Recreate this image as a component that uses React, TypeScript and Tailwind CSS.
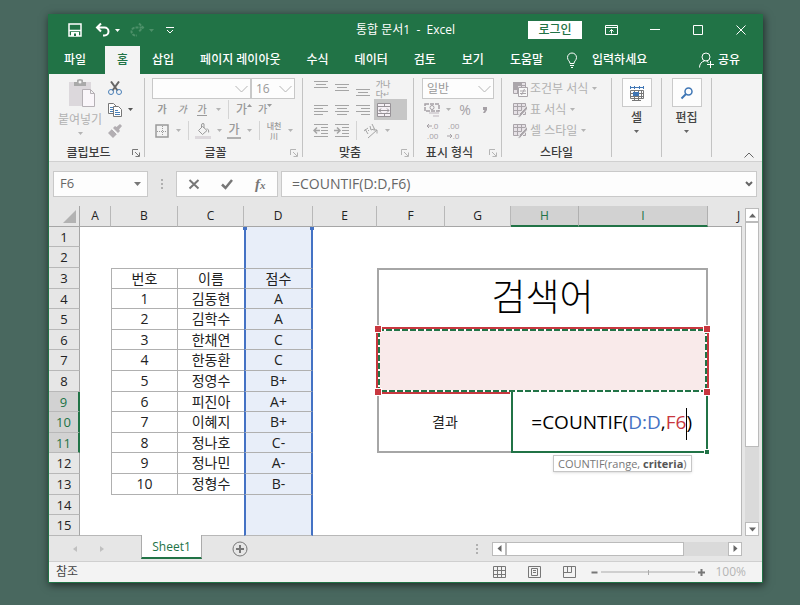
import type { ReactNode } from 'react';
import clsx from 'clsx';

const menuTabs = ['삽입', '페이지 레이아웃', '수식', '데이터', '검토', '보기', '도움말'];

const students = [
  ['번호', '이름', '점수'],
  ['1', '김동현', 'A'],
  ['2', '김학수', 'A'],
  ['3', '한채연', 'C'],
  ['4', '한동환', 'C'],
  ['5', '정영수', 'B+'],
  ['6', '피진아', 'A+'],
  ['7', '이혜지', 'B+'],
  ['8', '정나호', 'C-'],
  ['9', '정나민', 'A-'],
  ['10', '정형수', 'B-'],
];

const rowHeights = ['h-[20px]', 'h-[21px]', 'h-[21px]', 'h-[20px]', 'h-[21px]'];

function Caret({ className = 'text-[#b4b4b4]' }: { className?: string }) {
  return (
    <svg viewBox="0 0 5 3" className={clsx('h-[3px] w-[5px] shrink-0', className)} fill="currentColor">
      <path d="M0 0h5L2.5 3z" />
    </svg>
  );
}

function Icon({ children, size = 16, className }: { children: ReactNode; size?: number; className?: string }) {
  return (
    <svg
      viewBox={`0 0 ${size} ${size}`}
      width={size}
      height={size}
      className={clsx('shrink-0', className)}
      fill="none"
      stroke="currentColor"
    >
      {children}
    </svg>
  );
}

function Tool({ label, className = 'w-5', children }: { label: string; className?: string; children: ReactNode }) {
  return (
    <button aria-label={label} className={clsx('flex h-full shrink-0 items-center justify-center', className)}>
      {children}
    </button>
  );
}

function Drop({ label }: { label: string }) {
  return (
    <Tool label={label} className="w-3">
      <Caret />
    </Tool>
  );
}

function Row({ children, className }: { children: ReactNode; className?: string }) {
  return <div className={clsx('flex h-[21px] items-center', className)}>{children}</div>;
}

function Rule() {
  return <span className="mx-1 h-[19px] w-px shrink-0 bg-[#d4d4d4]" />;
}

function Group({
  title,
  className,
  launcher,
  children,
}: {
  title?: string;
  className: string;
  launcher?: string;
  children: ReactNode;
}) {
  return (
    <>
      <section className={clsx('flex shrink-0 flex-col', className)}>
        <div className="h-[63px]">{children}</div>
        {title && (
          <div className="flex h-5 items-center pt-[3px]">
            <h2 className="flex-1 text-center text-xs font-medium text-[#3b3b3b]">{title}</h2>
            {launcher && (
              <button aria-label={`${title} 설정`} className={clsx('flex w-4 justify-center', launcher)}>
                <Icon size={8}>
                  <path d="M.5 6V.5H6M3 3l4 4M7.500 3.500v4h-4" />
                </Icon>
              </button>
            )}
          </div>
        )}
      </section>
      <span className="mb-1 w-px shrink-0 bg-[#c3c3c3]" />
    </>
  );
}

function Combo({ label, value, className }: { label: string; value: string; className: string }) {
  return (
    <div className={clsx('relative h-[21px]', className)}>
      <select
        aria-label={label}
        className="block h-full w-full appearance-none border border-[#c8c8c8] bg-[#fdfdfd] pl-1 text-xs leading-[19px] text-[#999]"
      >
        <option>{value}</option>
      </select>
      <svg
        viewBox="0 0 13 8"
        className="pointer-events-none absolute top-[7px] right-[3px] h-2 w-[13px]"
        fill="none"
        stroke="#b5b5b5"
      >
        <path d="M.5 1l6 6 6-6" />
      </svg>
    </div>
  );
}

function Lines({ rows }: { rows: number[][] }) {
  return (
    <Icon>
      {rows.map(([x, y, w]) => (
        <path key={y} d={`M${x} ${y}.5h${w}`} />
      ))}
    </Icon>
  );
}

function TitleBar() {
  return (
    <header className="flex h-8 items-center text-white">
      <div className="flex flex-1 items-center">
        <button aria-label="저장" className="ml-[18px]">
          <Icon>
            <path strokeWidth="1.500" d="M2 2h12v12H2zM2 8.500h12" />
            <path fill="currentColor" stroke="none" d="M4 10h8v4H4z" />
            <path stroke="#217346" strokeWidth="2" d="M8 11.500V14" />
          </Icon>
        </button>
        <button aria-label="실행 취소" className="ml-3">
          <Icon>
            <path strokeWidth="2" d="M6 1.500L2 5.500l4 4M2.500 5.500H9.500a4 4 0 0 1 0 8H8" />
          </Icon>
        </button>
        <button aria-label="실행 취소 목록" className="ml-1">
          <Caret className="text-white" />
        </button>
        <button aria-label="다시 실행" className="ml-[9px] text-[#4d9069]">
          <Icon>
            <path strokeWidth="2" strokeDasharray="3 1" d="M10 1.500l4 4-4 4M13.500 5.500H6.500a4 4 0 0 0 0 8H8" />
          </Icon>
        </button>
        <button aria-label="다시 실행 목록" className="ml-1">
          <Caret className="text-[#4d9069]" />
        </button>
        <button aria-label="빠른 실행 도구 모음" className="ml-3">
          <Icon size={8}>
            <path d="M0 1.500h8M1 4l3 3 3-3" />
          </Icon>
        </button>
      </div>
      <h1 className="text-xs whitespace-pre">통합 문서1  -  Excel</h1>
      <div className="flex flex-1 items-center justify-end">
        <button className="mr-2 h-[18px] w-[54px] bg-white text-xs leading-[18px] font-medium text-[#217346]">로그인</button>
        <button aria-label="리본 메뉴 표시 옵션" className="flex w-[43px] justify-center">
          <Icon size={13}>
            <path d="M.5 1.500h12v9H.5zM.5 3.500h12M6.500 9.500V5.500M4.500 7.500l2-2 2 2" />
          </Icon>
        </button>
        <button aria-label="최소화" className="flex w-[43px] justify-center">
          <Icon size={10}>
            <path d="M0 4.500h10" />
          </Icon>
        </button>
        <button aria-label="최대화" className="flex w-[43px] justify-center">
          <Icon size={10}>
            <path d="M.5.5h9v9h-9z" />
          </Icon>
        </button>
        <button aria-label="닫기" className="flex w-[43px] justify-center">
          <Icon size={10}>
            <path d="M.5.5l9 9M9.500.5l-9 9" />
          </Icon>
        </button>
      </div>
    </header>
  );
}

function MenuBar() {
  return (
    <nav className="flex h-7 items-stretch text-xs font-medium whitespace-nowrap text-white">
      <button className="mr-1 w-[52px]">파일</button>
      <button className="w-[35px] bg-[#f3f3f3] text-[#217346]">홈</button>
      <div className="flex gap-[2px]">
        {menuTabs.map((tab) => (
          <button key={tab} className="px-3">
            {tab}
          </button>
        ))}
      </div>
      <button className="ml-[9px] flex items-center gap-3">
        <Icon>
          <path d="M6 11.500C6 9 3.500 8.500 3.500 5.500a4.500 4.500 0 0 1 9 0C12.500 8.500 10 9 10 11.500zM6 13.500h4M7 15.500h2" />
        </Icon>
        입력하세요
      </button>
      <button className="mr-[22px] ml-auto flex items-center gap-1">
        <Icon>
          <circle cx="8" cy="5" r="4" />
          <path d="M1.500 15.500c0-3.500 2-6 5-6.500M8.500 9l2 1.500M12.500 9v7M9 12.500h7" />
        </Icon>
        공유
      </button>
    </nav>
  );
}

function ClipboardGroup() {
  return (
    <Group title="클립보드" className="w-[95px]" launcher="text-[#777]">
      <div className="flex">
        <button className="ml-2 flex w-[46px] flex-col items-center text-xs leading-4 whitespace-nowrap text-[#b1b1b1]">
          <svg viewBox="0 0 28 30" className="ml-1 h-[30px] w-7">
            <path fill="#dcd8dc" d="M1 4h22v24H1z" />
            <path fill="#a9a9a9" d="M6 4h3V2.500Q9 1 12 1t3 1.500V4h3v4H6z" />
            <circle cx="12" cy="4" r="1.500" fill="#f3f3f3" />
            <path fill="#faf6fa" stroke="#b5b0b5" d="M14.500 11.500h8l4 4v13h-12zM22.500 11.500v4h4" />
          </svg>
          <span className="mt-1">붙여넣기</span>
          <Caret className="mt-1 text-[#b4b4b4]" />
        </button>
        <div className="ml-1">
          <Row>
            <Tool label="잘라내기" className="w-4">
              <Icon>
                <path stroke="#666" strokeWidth="2" d="M4 .5l6.500 9M12 .5l-6.500 9" />
                <circle cx="4" cy="11" r="2.500" stroke="#4a80b8" />
                <circle cx="12" cy="11" r="2.500" stroke="#4a80b8" />
              </Icon>
            </Tool>
          </Row>
          <Row>
            <Tool label="복사" className="w-4">
              <Icon>
                <path stroke="#777" fill="#fff" d="M1.500 1.500h5l3 3v7h-8z" />
                <path stroke="#4a80b8" d="M3 5.500h3M3 7.500h3M3 9.500h3" />
                <path stroke="#777" fill="#fff" d="M6.500 4.500h5l3 3v7h-8z" />
                <path stroke="#4a80b8" d="M8 8.500h3M8 10.500h5M8 12.500h5" />
              </Icon>
            </Tool>
            <Tool label="복사 옵션" className="w-[15px]">
              <Caret className="text-[#555]" />
            </Tool>
          </Row>
          <Row>
            <Tool label="서식 복사" className="w-4">
              <Icon>
                <path fill="#b2aeb2" stroke="none" d="M13 1l2 2-3 3.500 1 1.500-2 2-5-5 2-2 1.500 1zM5 6l5 5-4 4-5-5z" />
                <path stroke="#f3f3f3" d="M4.500 5.500l6 6" />
              </Icon>
            </Tool>
          </Row>
        </div>
      </div>
    </Group>
  );
}

function FontGroup() {
  return (
    <Group title="글꼴" className="w-[157px]" launcher="text-[#b5b5b5]">
      <div className="pl-[7px] text-xs text-[#9a9a9a]">
        <Row>
          <Combo label="글꼴" value="" className="w-[99px]" />
          <Combo label="글꼴 크기" value="16" className="w-[44px]" />
        </Row>
        <Row>
          <Tool label="굵게">
            <b className="text-[10px]">가</b>
          </Tool>
          <Tool label="기울임꼴">
            <i className="text-[10px] font-medium">가</i>
          </Tool>
          <Tool label="밑줄">
            <span className="border-b border-[#9a9a9a] text-[10px] leading-3 font-medium">가</span>
          </Tool>
          <Drop label="밑줄 종류" />
          <Rule />
          <Tool label="글꼴 크기 크게" className="w-[22px]">
            <span className="text-xs font-medium">가</span>
            <Icon size={5} className="mb-2">
              <path fill="currentColor" stroke="none" d="M0 4l2.500-3L5 4z" />
            </Icon>
          </Tool>
          <Tool label="글꼴 크기 작게">
            <span className="text-[10px] font-medium">가</span>
            <Icon size={5} className="mb-2">
              <path fill="currentColor" stroke="none" d="M0 1h5L2.500 4z" />
            </Icon>
          </Tool>
        </Row>
        <Row>
          <Tool label="테두리">
            <Icon size={14}>
              <path strokeWidth="1.500" d="M1 1h12v12H1z" />
              <path strokeDasharray="1 1" d="M7.500 2v10M2 7.500h10" />
            </Icon>
          </Tool>
          <Drop label="테두리 종류" />
          <Rule />
          <Tool label="채우기 색">
            <Icon>
              <path d="M3.500 7.500l4-4 4.500 4-4.500 4zM6.500 5V2q0-1.500 1.500-1.500T9 2v3" />
              <path fill="currentColor" stroke="none" d="M11 5q4 1 3 5-1 0-1-3z" />
              <path stroke="#dcd8dc" strokeWidth="3" d="M0 14.500h16" />
            </Icon>
          </Tool>
          <Drop label="채우기 색 선택" />
          <Tool label="글꼴 색" className="w-[18px]">
            <span className="border-b-2 border-[#b0b0b0] px-px text-xs leading-[14px] font-medium">가</span>
          </Tool>
          <Drop label="글꼴 색 선택" />
          <Rule />
          <Tool label="윗주 필드">
            <span className="text-[8px] leading-[10px] font-medium">
              내천
              <br />川
            </span>
          </Tool>
          <Drop label="윗주 옵션" />
        </Row>
      </div>
    </Group>
  );
}

function AlignGroup() {
  return (
    <Group title="맞춤" className="w-[110px]" launcher="text-[#b5b5b5]">
      <div className="pl-[7px] text-[#a5a5a5]">
        <Row>
          <Tool label="위쪽 맞춤" className="w-[21px]">
            <Lines rows={[[1, 0, 14], [3, 3, 10], [1, 6, 14]]} />
          </Tool>
          <Tool label="가운데 맞춤" className="w-[21px]">
            <Lines rows={[[1, 3, 14], [3, 6, 10], [1, 9, 14]]} />
          </Tool>
          <Tool label="아래쪽 맞춤" className="w-[21px]">
            <Lines rows={[[1, 8, 14], [3, 11, 10], [1, 14, 14]]} />
          </Tool>
          <Tool label="텍스트 줄 바꿈">
            <span className="text-left text-[8px] leading-[10px] font-medium">
              가나
              <br />
              다↵
            </span>
          </Tool>
        </Row>
        <Row>
          <Tool label="왼쪽 맞춤" className="w-[21px]">
            <Lines rows={[[1, 3, 14], [1, 6, 9], [1, 9, 14], [1, 12, 9]]} />
          </Tool>
          <Tool label="가로 가운데 맞춤" className="w-[21px]">
            <Lines rows={[[1, 3, 14], [3, 6, 10], [1, 9, 14], [3, 12, 10]]} />
          </Tool>
          <Tool label="오른쪽 맞춤" className="w-[21px]">
            <Lines rows={[[1, 3, 14], [6, 6, 9], [1, 9, 14], [6, 12, 9]]} />
          </Tool>
          <button aria-label="병합하고 가운데 맞춤" className="ml-px flex h-full w-[33px] items-center bg-[#c6c6c6] pl-[3px]">
            <Icon size={14} className="text-[#979297]">
              <path fill="#f5f0f5" d="M.5.5h13v13H.5zM.5 3.500h13M.5 10.500h13M7.500.5v3M7.500 10.500v3M2 7.500h10M4 5.500l-2 2 2 2M10 5.500l2 2-2 2" />
            </Icon>
          </button>
        </Row>
        <Row>
          <Tool label="내어쓰기" className="w-[21px]">
            <Icon>
              <path d="M1 1.500h14M8 4.500h7M8 7.500h7M8 10.500h7M1 13.500h14" />
              <path strokeWidth="1.500" d="M7 7.500H1.500M4 4.500l-3 3 3 3" />
            </Icon>
          </Tool>
          <Tool label="들여쓰기" className="w-[21px]">
            <Icon>
              <path d="M1 1.500h14M8 4.500h7M8 7.500h7M8 10.500h7M1 13.500h14" />
              <path strokeWidth="1.500" d="M0 7.500h6M3 4.500l3 3-3 3" />
            </Icon>
          </Tool>
          <Rule />
          <Tool label="방향">
            <Icon>
              <path d="M5 15l9-8M10.500 7H14v3.500M1 8l4-3M2 6l3 5M5 8l1-1M7 3l1 4 3-1M9 1l3 6" />
            </Icon>
          </Tool>
          <Drop label="방향 선택" />
        </Row>
      </div>
    </Group>
  );
}

function NumberGroup() {
  return (
    <Group title="표시 형식" className="w-[87px]" launcher="text-[#b5b5b5]">
      <div className="pl-2 text-[#a5a0a5]">
        <Row>
          <Combo label="표시 형식" value="일반" className="w-[72px]" />
        </Row>
        <Row>
          <Tool label="회계 표시 형식">
            <Icon>
              <path strokeWidth="1.500" strokeDasharray="4 1" d="M1 2h14v7H1z" />
              <circle cx="8" cy="5.500" r="2" />
              <path stroke="#d8d4d8" strokeWidth="2" d="M5 11h5M9 14h6M10 11h5" />
            </Icon>
          </Tool>
          <Drop label="회계 형식 선택" />
          <Tool label="백분율 스타일" className="w-[22px]">
            <span className="text-sm font-medium">%</span>
          </Tool>
          <Tool label="쉼표 스타일" className="w-[18px]">
            <Icon size={8}>
              <path fill="currentColor" stroke="none" d="M2 1h4v3L4 7H2l1.500-3H2z" />
            </Icon>
          </Tool>
        </Row>
        <Row className="text-[8px] leading-[10px] font-medium">
          <Tool label="자릿수 늘림">
            <span className="flex flex-col items-end">
              <span className="flex items-center">
                <Icon size={6}>
                  <path d="M6 3H1M3 1L1 3l2 2" />
                </Icon>
                .0
              </span>
              <span>.00</span>
            </span>
          </Tool>
          <Tool label="자릿수 줄임" className="w-[22px]">
            <span className="flex flex-col items-end">
              <span>.00</span>
              <span className="flex items-center">
                <Icon size={6}>
                  <path d="M0 3h5M3 1l2 2-2 2" />
                </Icon>
                .0
              </span>
            </span>
          </Tool>
        </Row>
      </div>
    </Group>
  );
}

function StyleItem({ label, children }: { label: string; children?: ReactNode }) {
  return (
    <Row>
      <button className="flex items-center text-xs whitespace-nowrap text-[#b1b1b1]">
        <Icon className="mr-[2px] text-[#aaa5aa]">
          <path fill="#e6e1e6" d="M1.500 1.500h12v11h-12zM1.500 4.500h12M1.500 8.500h12M5.500 1.500v11M9.500 1.500v11" />
          {children}
        </Icon>
        {label}
        <Caret className="ml-1 text-[#b4b4b4]" />
      </button>
    </Row>
  );
}

function StyleGroup() {
  const brush = <path fill="#aaa5aa" stroke="#f3f3f3" d="M15.500 3v4L10 13q-1 3-5 2.500 2-1 2.500-4z" />;
  return (
    <Group title="스타일" className="w-[109px]">
      <div className="pl-[10px]">
        <StyleItem label="조건부 서식">
          <path fill="#aaa5aa" stroke="none" d="M1 1h8v4H5v4H1z" />
          <path fill="#f8f8f8" d="M6.500 6.500h9v9h-9zM8 10h6M8 12.500h6M12.500 8l-3 6" />
        </StyleItem>
        <StyleItem label="표 서식">{brush}</StyleItem>
        <StyleItem label="셀 스타일">{brush}</StyleItem>
      </div>
    </Group>
  );
}

function BigTool({ label, children }: { label: string; children: ReactNode }) {
  return (
    <Group className="w-[49px]">
      <button className="mx-auto flex flex-col items-center text-xs text-[#444]">
        <span className="flex h-[29px] w-[30px] items-center justify-center border border-[#cacaca] bg-[#fdfdfd]">
          {children}
        </span>
        <span className="mt-px leading-5 font-medium">{label}</span>
        <Caret className="mt-[2px] text-[#666]" />
      </button>
    </Group>
  );
}

function Ribbon() {
  return (
    <div className="flex h-[88px] items-stretch border-b border-[#d0d0d0] bg-[#f3f3f3] pt-1">
      <ClipboardGroup />
      <FontGroup />
      <AlignGroup />
      <NumberGroup />
      <StyleGroup />
      <BigTool label="셀">
        <Icon className="text-[#777]">
          <path d="M1.500 5.500h13v8h-13zM1.500 8.500h13M1.500 11.500h13M5.500 5.500v10M9.500 5.500v10M12.500 5.500v8M3 15.500h9" />
          <path stroke="#3f76b5" d="M1 2.500h14M1.500 1v3M5.500 1v3M10.500 1v3M14.500 1v3" />
          <path fill="#3f76b5" stroke="none" d="M4 7h6v4H4z" />
        </Icon>
      </BigTool>
      <BigTool label="편집">
        <Icon size={14} className="text-[#3f76b5]">
          <circle cx="8.500" cy="5.500" r="3.500" strokeWidth="1.500" />
          <path strokeWidth="2" d="M6 8l-4.500 4.500" />
        </Icon>
      </BigTool>
      <button aria-label="리본 메뉴 축소" className="mr-2 mb-px ml-auto self-end text-[#666]">
        <Icon size={10}>
          <path d="M.5 7.500L5 3l4.500 4.500" />
        </Icon>
      </button>
    </div>
  );
}

function Dots() {
  return (
    <svg viewBox="0 0 2 10" className="h-[10px] w-[2px]" fill="#b0b0b0">
      <path d="M0 0h2v2H0zM0 4h2v2H0zM0 8h2v2H0z" />
    </svg>
  );
}

function FormulaBar() {
  return (
    <div className="flex h-[44px] items-center pr-[5px] pl-1 text-[#666]">
      <div className="flex h-[26px] w-[95px] items-center border border-[#c9c9c9] bg-[#fdfdfd]">
        <input aria-label="이름 상자" defaultValue="F6" className="w-full min-w-0 pl-[6px] text-[13px] outline-none" />
        <button aria-label="이름 목록" className="px-[6px]">
          <svg viewBox="0 0 7 4" className="h-1 w-[7px]" fill="#777">
            <path d="M0 0h7L3.500 4z" />
          </svg>
        </button>
      </div>
      <div className="flex w-7 justify-center">
        <Dots />
      </div>
      <div className="mr-[3px] flex h-[26px] w-[102px] items-center border border-[#c9c9c9] bg-[#fdfdfd] text-[#777]">
        <button aria-label="취소" className="flex flex-1 justify-center">
          <Icon size={12}>
            <path strokeWidth="2" d="M1.500 2l9 8.500M10.500 2l-9 8.500" />
          </Icon>
        </button>
        <button aria-label="입력" className="flex flex-1 justify-center">
          <Icon size={12}>
            <path strokeWidth="2.500" d="M1 6.500l3.500 3.500L11 2" />
          </Icon>
        </button>
        <button
          aria-label="함수 삽입"
          className="flex-1 font-['Liberation_Serif',serif] text-[15px] leading-5 font-bold italic"
        >
          f<span className="text-[11px]">x</span>
        </button>
      </div>
      <div className="flex h-[26px] min-w-0 flex-1 items-center border border-[#c9c9c9] bg-[#fdfdfd]">
        <input
          aria-label="수식 입력줄"
          defaultValue="=COUNTIF(D:D,F6)"
          className="w-full min-w-0 pl-[10px] text-sm outline-none"
        />
        <button aria-label="수식 입력줄 확장" className="px-[3px]">
          <Icon size={8}>
            <path strokeWidth="2" d="M1 2l3 3 3-3" />
          </Icon>
        </button>
      </div>
    </div>
  );
}

function Handle({ className }: { className: string }) {
  return <span className={clsx('absolute box-content size-[6px] border border-white bg-[#c8373f]', className)} />;
}

function MergedCells({ row }: { row: number }) {
  if (row === 3) {
    return (
      <td
        colSpan={4}
        rowSpan={3}
        className="border-2 border-b-0 border-[#a6a6a6] align-top text-[37px] leading-[54px] font-light text-black"
      >
        검색어
      </td>
    );
  }
  if (row === 6) {
    return (
      <td colSpan={4} rowSpan={3} className="relative bg-[#f9eaea]">
        <span className="absolute -inset-x-px -top-[3px] -bottom-[2px] z-10 border-2 border-b-0 border-[#c8373f]">
          <span className="absolute bottom-0 left-0 h-[2px] w-2/5 bg-[#c8373f]" />
          <svg className="absolute inset-x-0 top-0 bottom-[2px] h-[calc(100%-2px)] w-full" fill="none" strokeWidth="4">
            <rect width="100%" height="100%" stroke="#fff" />
            <rect width="100%" height="100%" stroke="#217346" strokeDasharray="6 2" />
          </svg>
          <Handle className="-top-1 -left-1" />
          <Handle className="-top-1 -right-1" />
          <Handle className="-bottom-[2px] -left-1" />
          <Handle className="-right-1 -bottom-[2px]" />
        </span>
      </td>
    );
  }
  if (row === 9) {
    return (
      <>
        <td colSpan={2} rowSpan={3} className="border-b-2 border-l-2 border-[#a6a6a6]">
          결과
        </td>
        <td
          colSpan={2}
          rowSpan={3}
          className="relative border-2 border-t-0 border-[#217346] text-right text-[19px] text-black"
        >
          <span className="inline-block pt-1 pr-[14px]">
            =COUNTIF(<span className="text-[#4472c4]">D:D</span>,<span className="text-[#c8373f]">F6</span>
            <span className="-mr-px inline-block h-8 w-px bg-black align-middle" />)
          </span>
          <span className="absolute -right-[3px] -bottom-[3px] size-[5px] border-t border-l border-white bg-[#217346]" />
          <span className="absolute top-full left-10 z-20 mt-1 border border-[#c6c6c6] bg-white px-1 text-[11px] leading-[15px] whitespace-nowrap text-[#777] shadow-sm">
            COUNTIF(range, <b className="text-[#555]">criteria</b>)
          </span>
        </td>
      </>
    );
  }
  if (row > 3 && row < 12) return null;
  return (
    <>
      <td />
      <td />
      <td />
      <td />
    </>
  );
}

function Sheet() {
  const heading = 'border-b border-[#a6a6a6] bg-[#e6e6e6] font-medium';
  return (
    <div className="min-w-0 flex-1 overflow-hidden">
      <table className="w-full table-fixed border-separate border-spacing-0 text-center text-sm leading-[18px] text-[#222] [&_td]:p-0 [&_th]:p-0 [&_tr:last-child>td]:border-b [&_tr:last-child>td]:border-b-[#b8b8b8]">
        <colgroup>
          <col className="w-[31px]" />
          <col className="w-[31px]" />
          <col className="w-[67px]" />
          <col className="w-[66px]" />
          <col className="w-[69px]" />
          <col className="w-[64px]" />
          <col className="w-[68px]" />
          <col className="w-[66px]" />
          <col className="w-[68px]" />
          <col className="w-[129px]" />
          <col />
        </colgroup>
        <thead className="text-xs leading-[18px]">
          <tr className="h-[21px]">
            <th className={clsx(heading, 'border-r')}>
              <svg viewBox="0 0 13 13" className="ml-auto mr-[3px] size-[13px]" fill="#b2b2b2">
                <path d="M13 0v13H0z" />
              </svg>
            </th>
            {['A', 'B', 'C', 'D', 'E', 'F', 'G'].map((letter) => (
              <th key={letter} scope="col" className={clsx(heading, 'border-r border-r-[#b8b8b8]')}>
                {letter}
              </th>
            ))}
            {['H', 'I'].map((letter) => (
              <th
                key={letter}
                scope="col"
                className="border-r border-b-2 border-r-[#b0b0b0] border-b-[#217346] bg-[#d2d2d2] font-medium text-[#217346]"
              >
                {letter}
              </th>
            ))}
            <th scope="col" className={clsx(heading, 'overflow-hidden')}>
              <span className="block pl-[29px] text-left">J</span>
            </th>
          </tr>
        </thead>
        <tbody>
          {Array.from({ length: 15 }, (_, i) => {
            const row = i + 1;
            const record = students[row - 3];
            const active = row > 8 && row < 12;
            const line = record && clsx('border-b border-b-[#b0b0b0]', row === 3 && 'border-t border-t-[#b0b0b0]');
            return (
              <tr key={row} className={clsx(rowHeights[i % 5], 'bg-white')}>
                <th
                  scope="row"
                  className={clsx(
                    'border-b border-b-[#b8b8b8] text-[13px] font-normal',
                    active
                      ? 'border-r-2 border-r-[#217346] bg-[#d2d2d2] text-[#217346]'
                      : 'border-r border-r-[#a6a6a6] bg-[#e6e6e6]',
                  )}
                >
                  {row}
                </th>
                <td />
                <td className={clsx(line, record && 'border-x border-x-[#b0b0b0]')}>{record?.[0]}</td>
                <td className={clsx(line)}>{record?.[1]}</td>
                <td className={clsx('relative border-x-2 border-x-[#4472c4] bg-[#e8eef9]', line)}>
                  {row === 1 && (
                    <>
                      <span className="absolute top-0 -left-[3px] h-[3px] w-1 bg-[#4472c4]" />
                      <span className="absolute top-0 -right-[3px] h-[3px] w-1 bg-[#4472c4]" />
                    </>
                  )}
                  {record?.[2]}
                </td>
                <td />
                <MergedCells row={row} />
                <td className="border-r border-[#b8b8b8]" />
              </tr>
            );
          })}
        </tbody>
      </table>
    </div>
  );
}

function ScrollButton({ label, d }: { label: string; d: string }) {
  return (
    <button
      aria-label={label}
      className="flex size-[14px] shrink-0 items-center justify-center border border-[#bbb] bg-white text-[#666]"
    >
      <svg viewBox="0 0 7 7" className="size-[7px]" fill="currentColor">
        <path d={d} />
      </svg>
    </button>
  );
}

function VerticalScroll() {
  return (
    <div className="flex w-5 shrink-0 flex-col px-[3px] pt-[2px]">
      <ScrollButton label="위로" d="M0 5.500h7L3.500 1.500z" />
      <div className="flex-1 bg-[#dadada]">
        <div className="h-3/4 border border-[#bbb] bg-white" />
      </div>
      <ScrollButton label="아래로" d="M0 1.500h7L3.500 5.500z" />
    </div>
  );
}

function SheetTabs() {
  return (
    <div className="flex h-[26px] items-center border-b border-[#cfcfcf] text-[#c0c0c0]">
      <button aria-label="이전 시트" className="ml-6">
        <svg viewBox="0 0 4 6" className="h-[6px] w-1" fill="currentColor">
          <path d="M4 0v6L0 3z" />
        </svg>
      </button>
      <button aria-label="다음 시트" className="ml-[23px]">
        <svg viewBox="0 0 4 6" className="h-[6px] w-1" fill="currentColor">
          <path d="M0 0v6l4-3z" />
        </svg>
      </button>
      <button className="-mt-px ml-[37px] w-[61px] self-start border-x border-b-2 border-x-[#ababab] border-b-[#217346] bg-white pt-[2px] text-xs leading-5 text-[#217346]">
        Sheet1
      </button>
      <button aria-label="새 시트" className="ml-[30px] text-[#777]">
        <Icon>
          <circle cx="8" cy="8" r="7" />
          <path strokeWidth="2" d="M8 4v8M4 8h8" />
        </Icon>
      </button>
      <div className="mr-5 ml-auto flex items-center gap-[14px]">
        <Dots />
        <div className="flex w-[250px]">
          <ScrollButton label="왼쪽으로" d="M5.500 0v7L1.500 3.500z" />
          <div className="flex-1 bg-[#dadada]">
            <div className="h-full w-4/5 border border-[#bbb] bg-white" />
          </div>
          <ScrollButton label="오른쪽으로" d="M1.500 0v7l4-3.500z" />
        </div>
      </div>
    </div>
  );
}

function StatusBar() {
  return (
    <footer className="flex h-5 items-center bg-[#f3f3f3] text-xs leading-5 text-[#777]">
      <span className="pl-[7px] text-[#444]">참조</span>
      <div className="ml-auto flex items-center gap-[22px]">
        <button aria-label="기본 보기">
          <Icon size={13}>
            <path d="M.5.5h12v11H.5zM4.500.5v11M8.500.5v11M.5 4.500h12M.5 8.500h12" />
          </Icon>
        </button>
        <button aria-label="페이지 레이아웃 보기">
          <Icon size={13}>
            <path d="M.5.5h12v11H.5zM3.500 2.500h6v7h-6zM5 4.500h3M5 6.500h3" />
          </Icon>
        </button>
        <button aria-label="페이지 나누기 미리 보기">
          <Icon size={13}>
            <path d="M.5.5h12v11H.5zM4.500.5v6M8.500.5v6M.5 6.500h8" />
          </Icon>
        </button>
      </div>
      <button aria-label="축소" className="ml-[15px]">
        <Icon size={7}>
          <path strokeWidth="2" d="M0.500 3.500h6" />
        </Icon>
      </button>
      <input
        type="range"
        aria-label="확대/축소"
        className="mx-[3px] h-[2px] w-[94px] appearance-none bg-[#cfcfcf] [&::-webkit-slider-thumb]:h-[5px] [&::-webkit-slider-thumb]:w-px [&::-webkit-slider-thumb]:appearance-none [&::-webkit-slider-thumb]:bg-[#aaa]"
      />
      <button aria-label="확대">
        <Icon size={7}>
          <path strokeWidth="2" d="M0 3.500h7M3.500 0v7" />
        </Icon>
      </button>
      <span className="mr-4 ml-[10px] text-[#b5b5b5]">100%</span>
    </footer>
  );
}

export default function App() {
  return (
    <main className="min-h-screen bg-[#49685f] pt-[14px] pr-[37px] pb-[22px] pl-12 font-['Open_Sans','Noto_Sans_CJK_KR',sans-serif]">
      <div className="border-x border-b border-[#217346] bg-[#217346] shadow-[1px_2px_8px_rgba(0,0,0,0.6)]">
        <TitleBar />
        <MenuBar />
        <div className="bg-[#e6e6e6]">
          <Ribbon />
          <FormulaBar />
          <div className="flex">
            <Sheet />
            <VerticalScroll />
          </div>
          <SheetTabs />
          <StatusBar />
        </div>
      </div>
    </main>
  );
}
